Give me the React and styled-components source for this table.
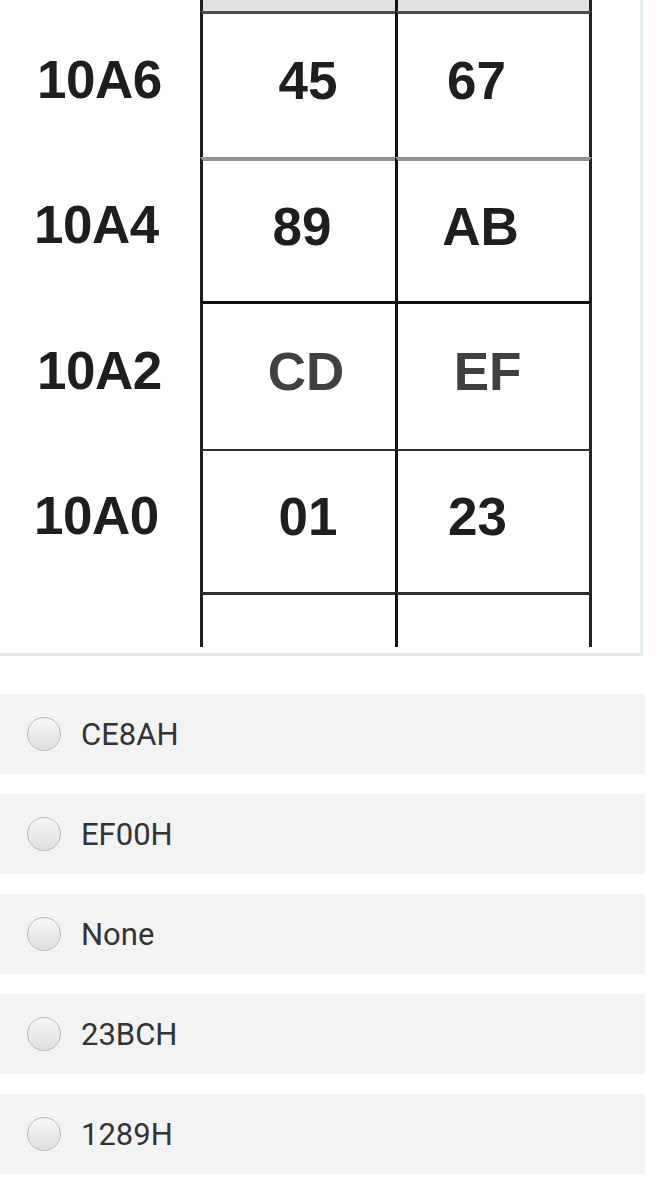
import * as React from 'react';
import styled, { createGlobalStyle } from 'styled-components';

const GlobalStyle = createGlobalStyle`
    html, body {
        margin: 0;
        padding: 0;
        background: #fff;
    }
`;

const Page = styled.div`
    width: 659px;
    display: flex;
    flex-direction: column;
`;

const Figure = styled.div`
    width: 640px;
    height: 653px;
    background: #fff;
    border-right: 3px solid #e3ecf0;
    border-bottom: 3px solid #e3ecf0;
    display: flex;
    flex-direction: column;
`;

const MemRow = styled.div`
    display: grid;
    grid-template-columns: 200px 195px 197px;
    height: ${p => p.h}px;
    font-family: 'Liberation Sans', Arial, sans-serif;
    font-weight: bold;
    font-size: 53px;
`;

const Label = styled.div`
    display: flex;
    align-items: center;
    padding-left: ${p => p.pl || 37}px;
    padding-bottom: 10px;
    color: #1e1e1e;
    letter-spacing: -0.5px;
`;

const Cell = styled.div`
    display: flex;
    align-items: center;
    justify-content: center;
    padding-left: ${p => p.shift > 0 ? p.shift * 2 : 0}px;
    padding-right: ${p => p.shift < 0 ? -p.shift * 2 : 0}px;
    padding-bottom: 10px;
    border-left: 3px solid ${p => p.first ? '#1e1e1e' : '#111'};
    border-right: ${p => p.last ? '3px solid #222' : 'none'};
    border-top: ${p => p.line || 'none'};
    background: ${p => p.fill || 'transparent'};
    color: ${p => p.faint ? '#404040' : '#1e1e1e'};
`;

const Options = styled.div`
    display: flex;
    flex-direction: column;
    gap: 20px;
    margin-top: 38px;
`;

const Option = styled.label`
    width: 645px;
    height: 80px;
    background: #f3f3f3;
    display: flex;
    align-items: center;
    gap: 20px;
    padding-left: 27px;
    box-sizing: border-box;
    font-family: Roboto, 'Noto Sans', sans-serif;
    font-size: 31px;
    color: #333;
`;

const Radio = styled.span`
    width: 32px;
    height: 32px;
    border-radius: 50%;
    border: 1px solid #b9b9b9;
    background: linear-gradient(#f7f7f7, #dedede);
    flex-shrink: 0;
`;

const rows = [
    { label: '10A6', a: '45', b: '67', h: 146, line: '3px solid #4d4d4d', sa: 9, sb: -17 },
    { label: '10A4', a: '89', b: 'AB', h: 144, line: '4px solid #8e978e', sa: 3, sb: -13, pl: 34 },
    { label: '10A2', a: 'CD', b: 'EF', h: 148, line: '3px solid #111', sa: 7, sb: -6, faint: true },
    { label: '10A0', a: '01', b: '23', h: 143, line: '2px solid #333', sa: 9, sb: -16, pl: 34 },
];

const answers = ['CE8AH', 'EF00H', 'None', '23BCH', '1289H'];

const App = () => {
    return (
        <Page>
            <GlobalStyle />
            <Figure>
                <MemRow h={11}>
                    <Label />
                    <Cell first fill="#e2e2e2" />
                    <Cell last fill="#e2e2e2" />
                </MemRow>

                {rows.map(r => (
                    <MemRow key={r.label} h={r.h}>
                        <Label pl={r.pl}>{r.label}</Label>
                        <Cell first line={r.line} shift={r.sa} faint={r.faint}>{r.a}</Cell>
                        <Cell last line={r.line} shift={r.sb} faint={r.faint}>{r.b}</Cell>
                    </MemRow>
                ))}

                <MemRow h={55}>
                    <Label />
                    <Cell first line="3px solid #2e2e2e" />
                    <Cell last line="3px solid #2e2e2e" />
                </MemRow>
            </Figure>

            <Options>
                {answers.map(a => (
                    <Option key={a}>
                        <Radio />
                        {a}
                    </Option>
                ))}
            </Options>
        </Page>
    );
};

export default App;
